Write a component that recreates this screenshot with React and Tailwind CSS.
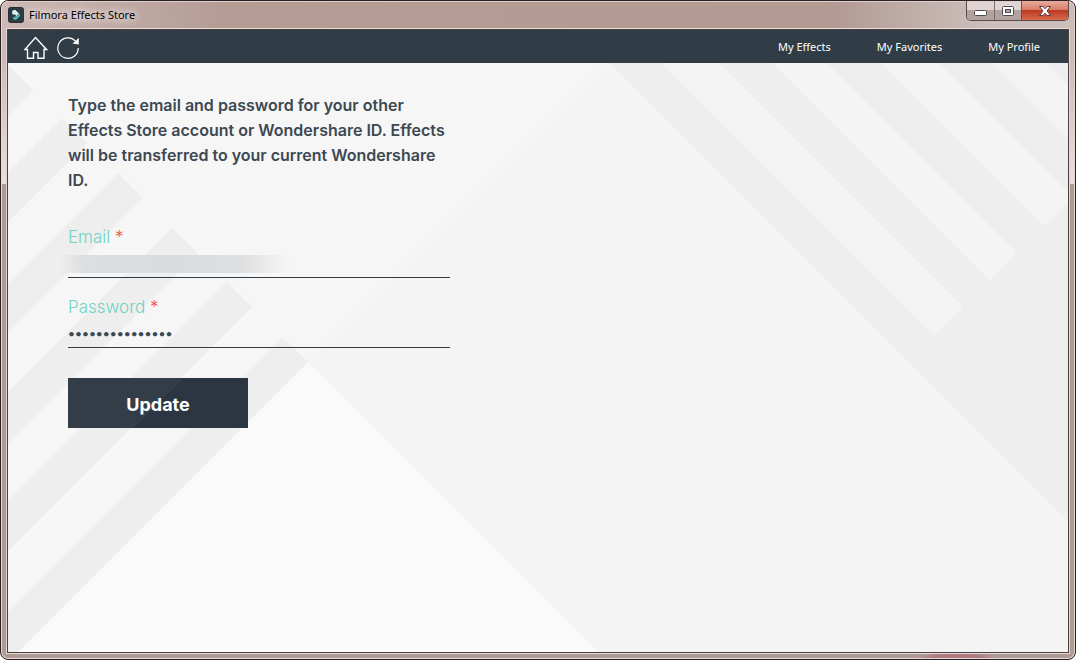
import React, { useState } from 'react';

// Diagonal stripes behind the form
function Backdrop() {
  return (
    <svg
      className="absolute inset-0 w-full h-full"
      viewBox="8 63 1060 589"
      preserveAspectRatio="xMinYMin slice"
      aria-hidden="true"
    >
      <rect x="8" y="63" width="1060" height="589" fill="#f6f6f6" />
      <path d="M308 362L607 63H1068V652H598Z" fill="#f4f4f4" />
      <path d="M18 652L308 362L598 652Z" fill="#fafafa" />
      <g fill="#eeeeee">
        <path d="M8 65L33 90L8 115Z" />
        <path d="M8 172L62 118L87 143L8 222Z" />
        <path d="M8 283L118 173L143 198L8 333Z" />
        <path d="M8 392L172 228L198 253L8 443Z" />
        <path d="M8 501L227 282L252 307L8 551Z" />
        <path d="M8 611L282 337L308 362L18 652H8Z" />
        <path d="M610 63H1068V521Z" />
      </g>
      <g fill="#f4f4f4">
        <path d="M661 63H719L963 307L934 336Z" />
        <path d="M772 63H827L1017 253L990 281Z" />
        <path d="M882 63H939L1068 192V203L1045 226Z" />
        <path d="M992 63H1046L1068 85V139Z" />
      </g>
    </svg>
  );
}

function WindowButtons() {
  return (
    <div className="mr-px -mt-px flex h-5 shrink-0 overflow-hidden rounded-b-[5px] border border-t-0 border-[#5b4a48]">
      <button
        type="button"
        aria-label="Minimize"
        className="flex w-7 items-center justify-center border-r border-[#7d6b69] bg-linear-to-b from-[#e0d5d3] from-50% to-[#b3a19e] to-50%"
      >
        <svg width="13" height="6" viewBox="0 0 13 6" className="mt-1">
          <rect x="0.5" y="0.5" width="12" height="5" rx="1" fill="#fff" stroke="#4d4a52" />
        </svg>
      </button>
      <button
        type="button"
        aria-label="Maximize"
        className="flex w-[27px] items-center justify-center border-r border-[#7d4a44] bg-linear-to-b from-[#e0d5d3] from-50% to-[#b3a19e] to-50%"
      >
        <svg width="12" height="10" viewBox="0 0 12 10">
          <rect x="0.5" y="0.5" width="11" height="9" rx="1" fill="#fff" stroke="#4d4a52" />
          <rect x="3.5" y="3.5" width="5" height="3" fill="#b3a19e" stroke="#4d4a52" />
        </svg>
      </button>
      <button
        type="button"
        aria-label="Close"
        className="flex w-[46px] items-center justify-center bg-[linear-gradient(#e8ab9d,#d97a66_49%,#bd3a22_50%,#d9694f)]"
      >
        <svg width="12" height="10" viewBox="0 0 12 10">
          <path
            d="M0.5 0.5H4L6 2.8L8 0.5H11.5L8 5L11.5 9.5H8L6 7.2L4 9.5H0.5L4 5Z"
            fill="#fff"
            stroke="#5a3a3c"
            strokeLinejoin="round"
          />
        </svg>
      </button>
    </div>
  );
}

function TitleBar() {
  return (
    <header className="flex h-[27px] items-start justify-between border-t border-[#dfcfcc] bg-[linear-gradient(90deg,transparent,#b59d96_20%,#b39b94_78%,#cbbebb_92%)] pl-[2px]">
      <div className="flex items-center gap-[5px] pt-1">
        <svg width="16" height="18" viewBox="0 0 16 18">
          <rect x="0.5" y="1.5" width="15" height="15" rx="2" fill="#2f3944" stroke="#252d38" />
          <path d="M4 5.500L5.500 4H7.500L11 7.500L8.500 10L7 8.500H4.500Z" fill="#d6f1ee" />
          <path d="M12 7.500V10L8 14L5 13V11.500L8.500 10Z" fill="#4fb8ae" />
        </svg>
        <h1 className="font-['Noto_Sans',sans-serif] text-[11px] leading-[18px] text-black [text-shadow:0_0_8px_#fff,0_0_8px_#fff]">
          Filmora Effects Store
        </h1>
      </div>
      <WindowButtons />
    </header>
  );
}

const links = ['My Effects', 'My Favorites', 'My Profile'];

function NavBar() {
  return (
    <nav className="flex h-[33px] items-center justify-between bg-[#303c46] pl-4 pr-7">
      <div className="flex items-center gap-[8px] pt-[2px]">
        <button type="button" aria-label="Home">
          <svg width="24" height="24" viewBox="0 0 24 24" fill="none" stroke="#fff" strokeWidth="1.400" className="block">
            <path d="M3.500 13.500H0.900L11.500 1.500L22.500 13.500H20V22.300H14V16.500H9.500V22.300H3.500Z" />
          </svg>
        </button>
        <button type="button" aria-label="Refresh">
          <svg width="24" height="24" viewBox="0 0 24 24" fill="none" stroke="#fff" strokeWidth="1.200" className="block">
            <path d="M19.500 5.200A10.200 10.200 0 1 0 22.200 12" />
            <path d="M16.500 7.500L22.800 8.500V1.800L20.500 4Z" fill="#fff" stroke="none" />
          </svg>
        </button>
      </div>
      <div className="flex gap-[46px] pt-[2px]">
        {links.map((link) => (
          <a
            key={link}
            href="#"
            className="font-['Noto_Sans',sans-serif] text-[11px] text-white hover:underline"
          >
            {link}
          </a>
        ))}
      </div>
    </nav>
  );
}

function TransferForm() {
  const [email, setEmail] = useState('');
  const [password, setPassword] = useState('effects-store-1');

  return (
    <form
      onSubmit={(e) => e.preventDefault()}
      className="relative w-[382px] max-w-full font-['Inter',sans-serif]"
    >
      <p className="text-base font-semibold leading-[25px] text-[#3c4852]">
        Type the email and password for your other Effects Store account or Wondershare ID. Effects
        will be transferred to your current Wondershare ID.
      </p>

      <div className="mt-8 border-b border-[#303c46]">
        <label htmlFor="email" className="block text-[17px] font-light leading-6 text-[#6fd3c2]">
          Email <span className="text-[#ec5a53]">*</span>
        </label>
        <div className="relative">
          <input
            id="email"
            type="email"
            value={email}
            onChange={(e) => setEmail(e.target.value)}
            className="block h-7 w-full bg-transparent text-base text-[#3c4852] outline-none"
          />
          <div className="pointer-events-none absolute -left-2 top-[6px] h-[18px] w-[229px] bg-[linear-gradient(90deg,transparent,#dcdedf_10%,#d9dbdc_50%,#dedfe0_80%,transparent)]" />
        </div>
      </div>

      <div className="mt-[17px] border-b border-[#303c46]">
        <label htmlFor="password" className="block text-[17px] font-light leading-6 text-[#6fd3c2]">
          Password <span className="text-[#ec5a53]">*</span>
        </label>
        <input
          id="password"
          type="password"
          value={password}
          onChange={(e) => setPassword(e.target.value)}
          className="block h-7 w-full bg-transparent font-['Lato',sans-serif] text-xs text-[#3c4852] outline-none"
        />
      </div>

      <button
        type="submit"
        className="mt-[30px] block h-[50px] w-[180px] bg-linear-135 from-[#323d48] from-50% to-[#2c3642] to-50% pt-1 text-lg font-bold text-white"
      >
        Update
      </button>
    </form>
  );
}

export default function App() {
  return (
    <div className="flex min-h-screen flex-col rounded-lg border border-[#2b2022] bg-[radial-gradient(40px_8px_at_89%_100%,#b07a7c_60%,transparent),linear-gradient(#ccb8b4,#cdbab7_60px,#eadedc_183px,#b09a94_183px)] px-[5px] pb-[5px] shadow-[inset_0_0_0_1px_#e6d8d5]">
      <TitleBar />
      <div className="flex flex-1 flex-col border border-[#e6d8d5]">
        <div className="flex flex-1 flex-col border border-[#4b3f42]">
          <NavBar />
          <main className="relative flex-1 overflow-hidden px-[60px] pb-10 pt-[30px]">
            <Backdrop />
            <TransferForm />
          </main>
        </div>
      </div>
    </div>
  );
}
